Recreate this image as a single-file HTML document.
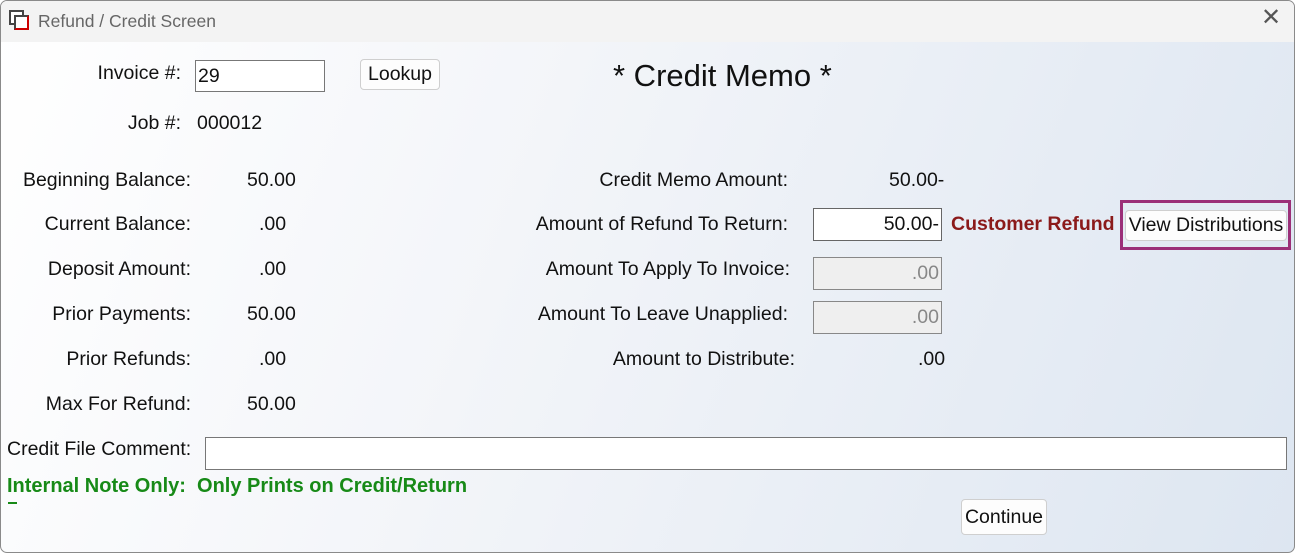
<html><head><style>
body{margin:0;width:1295px;height:553px;overflow:hidden;font-family:"Liberation Sans",sans-serif;background:#fff}
.win{position:absolute;left:0;top:0;width:1293px;height:551px;border:1px solid #8a8a8a;border-radius:7px;overflow:hidden;background:linear-gradient(110deg,#ffffff 0%,#f3f5f9 40%,#dde6f1 100%)}
.tb{position:absolute;left:0;top:0;width:100%;height:41px;background:#f3f3f3}
.t{position:absolute;font-size:19.5px;color:#111;white-space:nowrap;line-height:20px}
.r{text-align:right}
.in{position:absolute;background:#fff;border:1px solid #777;box-sizing:border-box;font-size:19.5px;line-height:28px;padding:0 2px;color:#111}
.dis{background:#efefef;border-color:#888;color:#888;text-align:right}
.btn{position:absolute;background:#fdfdfd;border:1px solid #cfcfcf;border-radius:4px;box-sizing:border-box;font-size:19.5px;text-align:center;color:#111;white-space:nowrap}
</style></head><body>
<div class="win">
<div class="tb"></div>
<div style="position:absolute;left:8px;top:9px;width:11px;height:11px;border:2px solid #444;background:#fff"></div>
<div style="position:absolute;left:13px;top:14px;width:11px;height:11px;border:2px solid #c00;border-left-color:#444;border-top-color:#444;background:#fff"></div>
<div class="t" style="left:37px;top:10px;color:#666;font-size:17.5px">Refund / Credit Screen</div>
<div class="t" style="left:1260px;top:7px;font-size:24px;color:#555">✕</div>

<div class="t r" style="left:0;width:180px;top:62px">Invoice #:</div>
<div class="in" style="left:194px;top:59px;width:130px;height:32px;line-height:30px">29</div>
<div class="btn" style="left:359px;top:58px;width:80px;height:31px;line-height:29px">Lookup</div>
<div class="t" style="left:612px;top:60px;font-size:31px;line-height:30px">* Credit Memo *</div>
<div class="t r" style="left:0;width:180px;top:112px">Job #:</div>
<div class="t" style="left:196px;top:112px">000012</div>

<div class="t r" style="left:0;width:190px;top:169px">Beginning Balance:</div>
<div class="t r" style="left:0;width:190px;top:213px">Current Balance:</div>
<div class="t r" style="left:0;width:190px;top:258px">Deposit Amount:</div>
<div class="t r" style="left:0;width:190px;top:303px">Prior Payments:</div>
<div class="t r" style="left:0;width:190px;top:348px">Prior Refunds:</div>
<div class="t r" style="left:0;width:190px;top:393px">Max For Refund:</div>
<div class="t" style="left:246px;top:169px">50.00</div>
<div class="t" style="left:258px;top:213px">.00</div>
<div class="t" style="left:258px;top:258px">.00</div>
<div class="t" style="left:246px;top:303px">50.00</div>
<div class="t" style="left:258px;top:348px">.00</div>
<div class="t" style="left:246px;top:393px">50.00</div>

<div class="t r" style="left:400px;width:387px;top:169px">Credit Memo Amount:</div>
<div class="t r" style="left:400px;width:387px;top:213px">Amount of Refund To Return:</div>
<div class="t r" style="left:400px;width:389px;top:258px">Amount To Apply To Invoice:</div>
<div class="t r" style="left:400px;width:387px;top:303px">Amount To Leave Unapplied:</div>
<div class="t r" style="left:400px;width:394px;top:348px">Amount to Distribute:</div>
<div class="t" style="left:888px;top:169px">50.00-</div>
<div class="in" style="left:812px;top:207px;width:129px;height:33px;line-height:31px;text-align:right;border-color:#666">50.00-</div>
<div class="in dis" style="left:812px;top:256px;width:129px;height:33px;line-height:31px">.00</div>
<div class="in dis" style="left:812px;top:300px;width:129px;height:33px;line-height:31px">.00</div>
<div class="t" style="left:917px;top:348px">.00</div>
<div class="t" style="left:950px;top:213px;color:#8b1a1a;font-weight:bold;font-size:19.5px">Customer Refund</div>
<div style="position:absolute;left:1119px;top:199px;width:171px;height:50px;border:3px solid #9b2f78;box-sizing:border-box"></div>
<div class="btn" style="left:1124px;top:209px;width:162px;height:31px;line-height:29px">View Distributions</div>

<div class="t" style="left:6px;top:438px">Credit File Comment:</div>
<div class="in" style="left:204px;top:436px;width:1082px;height:33px"></div>
<div class="t" style="left:6px;top:475px;color:#178a17;font-weight:bold;font-size:20px">Internal Note Only:&nbsp; Only Prints on Credit/Return</div>
<div style="position:absolute;left:7px;top:501px;width:9px;height:2px;background:#178a17"></div>
<div class="btn" style="left:960px;top:498px;width:86px;height:36px;line-height:34px">Continue</div>
</div>
</body></html>
